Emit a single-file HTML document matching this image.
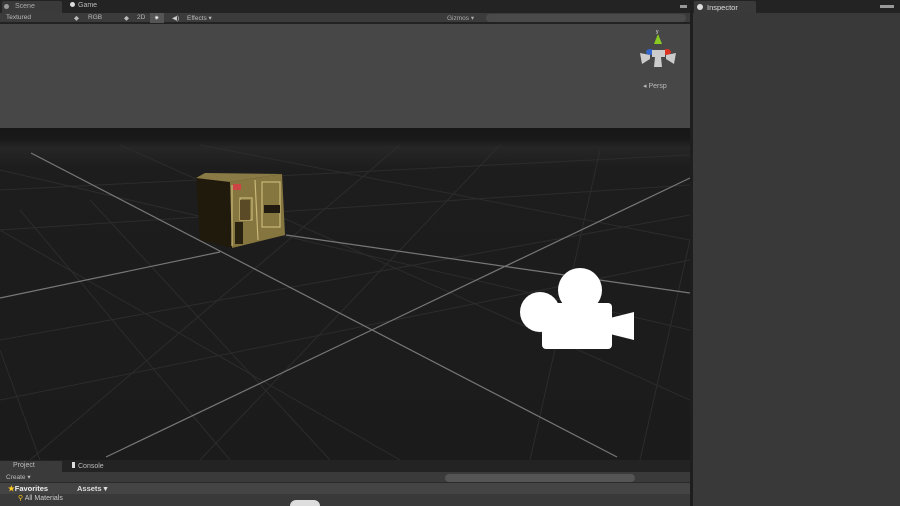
<!DOCTYPE html>
<html><head><style>
body{margin:0;width:900px;height:506px;overflow:hidden;background:#222;font-family:"Liberation Sans",sans-serif;font-size:7px;color:#c8c8c8;position:relative}
div{position:absolute;box-sizing:border-box}
</style></head><body>
<div style="left:0;top:0;width:690px;height:13px;background:#232323"></div>
<div style="left:2px;top:1px;width:60px;height:12px;background:#3a3a3a;border-radius:2px 2px 0 0;padding:2px 0 0 13px;color:#aaa">Scene</div>
<div style="left:4px;top:4px;width:5px;height:5px;border-radius:50%;background:#999"></div>
<div style="left:70px;top:2px;color:#bbb"><span style="display:inline-block;width:5px;height:5px;border-radius:50%;background:#ddd;margin-right:3px"></span>Game</div>
<div style="left:680px;top:5px;width:7px;height:3px;background:#999"></div>
<div style="left:0;top:13px;width:690px;height:10px;background:#3b3b3b;border-bottom:1px solid #222"></div>
<div style="left:6px;top:14px;color:#bbb;font-size:6.5px">Textured</div>
<div style="left:74px;top:14px;color:#bbb;font-size:6.5px">◆</div>
<div style="left:88px;top:14px;color:#bbb;font-size:6.5px">RGB</div>
<div style="left:124px;top:14px;color:#bbb;font-size:6.5px">◆</div>
<div style="left:137px;top:14px;color:#bbb;font-size:6.5px">2D</div>
<div style="left:150px;top:13px;width:14px;height:10px;background:#555"></div>
<div style="left:154px;top:14px;color:#eee;font-size:6.5px">✷</div>
<div style="left:172px;top:14px;color:#ccc;font-size:6.5px">◀)</div>
<div style="left:187px;top:14px;color:#bbb;font-size:6.5px">Effects ▾</div>
<div style="left:447px;top:14px;color:#aaa;font-size:6.5px">Gizmos ▾</div>
<div style="left:486px;top:14px;width:200px;height:8px;background:#4a4a4a;border-radius:4px"></div>
<div style="left:690px;top:0;width:3px;height:506px;background:#1e1e1e"></div>
<div style="left:693px;top:0;width:207px;height:13px;background:#232323"></div>
<div style="left:694px;top:1px;width:62px;height:12px;background:#3a3a3a;border-radius:2px 2px 0 0;padding:2px 0 0 13px;color:#ddd;font-size:7.5px">Inspector</div>
<div style="left:697px;top:4px;width:6px;height:6px;border-radius:50%;background:#ddd"></div>
<div style="left:880px;top:5px;width:14px;height:3px;background:#999"></div>
<div style="left:693px;top:13px;width:207px;height:493px;background:#393939"></div>
<svg style="position:absolute;left:0;top:24px" width="690" height="436" viewBox="0 24 690 436">
<defs><linearGradient id="g" x1="0" y1="0" x2="0" y2="1"><stop offset="0" stop-color="#171717"/><stop offset="0.03" stop-color="#181818"/><stop offset="0.06" stop-color="#262626"/><stop offset="0.12" stop-color="#1d1d1d"/><stop offset="1" stop-color="#1b1b1b"/></linearGradient></defs>
<rect x="0" y="24" width="690" height="104" fill="#474747"/>
<rect x="0" y="128" width="690" height="332" fill="url(#g)"/>
<g stroke="#2c2c2c" stroke-width="1" fill="none">
<line x1="0" y1="190" x2="690" y2="155"/><line x1="0" y1="230" x2="690" y2="185"/>
<line x1="0" y1="340" x2="690" y2="215"/><line x1="0" y1="400" x2="690" y2="260"/>
<line x1="200" y1="145" x2="690" y2="240"/><line x1="0" y1="170" x2="690" y2="330"/>
<line x1="0" y1="230" x2="400" y2="460"/><line x1="120" y1="145" x2="690" y2="400"/>
<line x1="0" y1="350" x2="40" y2="460"/><line x1="20" y1="210" x2="230" y2="460"/>
<line x1="90" y1="200" x2="330" y2="460"/><line x1="500" y1="145" x2="200" y2="460"/>
<line x1="600" y1="150" x2="530" y2="460"/><line x1="690" y1="240" x2="640" y2="460"/>
<line x1="400" y1="145" x2="30" y2="460"/>
</g>
<g stroke="#777" stroke-width="1.2" fill="none">
<line x1="31" y1="153" x2="617" y2="457"/>
<line x1="690" y1="178" x2="106" y2="457"/>
<line x1="0" y1="298" x2="220" y2="252"/>
<line x1="286" y1="235" x2="690" y2="293"/>
</g>
<polygon points="196,178 230,182 232,248 200,240" fill="#201a0c"/>
<polygon points="196,178 205,173 282,174 230,182" fill="#8a7a45"/>
<polygon points="230,182 282,174 285,235 232,248" fill="#85753f"/>
<g fill="none" stroke="#c8b878" stroke-width="1.2">
<polyline points="232,185 232,246"/><polyline points="255,180 258,240"/>
<rect x="240" y="198" width="12" height="22"/><rect x="262" y="182" width="18" height="45"/>
</g>
<rect x="240" y="200" width="10" height="20" fill="#5a4a25"/>
<rect x="235" y="222" width="8" height="22" fill="#2a2210"/>
<rect x="264" y="205" width="16" height="8" fill="#201a10"/>
<rect x="233" y="184" width="8" height="6" fill="#c44"/>
<g fill="#fff">
<circle cx="540" cy="312" r="20"/>
<circle cx="580" cy="290" r="22"/>
<rect x="542" y="303" width="70" height="46" rx="4"/>
<polygon points="610,318 634,312 634,340 610,334"/>
</g>
</svg>
<svg style="position:absolute;left:636px;top:28px" width="46" height="40">
<polygon points="18,16 22,6 26,16" fill="#8c2"/>
<text x="20" y="5" fill="#eee" font-size="5" font-family="Liberation Sans">y</text>
<ellipse cx="14" cy="24" rx="4" ry="3" fill="#36c"/>
<ellipse cx="31" cy="24" rx="4" ry="3" fill="#d32"/>
<rect x="16" y="22" width="13" height="7" fill="#ccc"/>
<path d="M4,25 L14,27 L14,31 L6,36 Z M40,25 L30,27 L30,31 L38,36 Z M19,29 L25,29 L26,39 L18,39 Z" fill="#ccc"/>
</svg>
<div style="left:643px;top:82px;color:#bbb;font-size:7px">◂ Persp</div>
<div style="left:0;top:460px;width:690px;height:12px;background:#232323"></div>
<div style="left:0;top:461px;width:62px;height:11px;background:#3a3a3a;padding:1px 0 0 13px;color:#bbb">Project</div>
<div style="left:72px;top:462px;color:#bbb"><span style="display:inline-block;width:3px;height:6px;background:#ddd;margin-right:3px"></span>Console</div>
<div style="left:0;top:472px;width:690px;height:11px;background:#3a3a3a;border-bottom:1px solid #2a2a2a"></div>
<div style="left:6px;top:473px;color:#bbb;font-size:6.5px">Create ▾</div>
<div style="left:445px;top:474px;width:190px;height:8px;background:#555;border-radius:4px"></div>
<div style="left:0;top:483px;width:690px;height:11px;background:#444"></div>
<div style="left:8px;top:484px;color:#eee;font-weight:bold;font-size:7.5px"><span style="color:#fc2">★</span>Favorites</div>
<div style="left:77px;top:484px;color:#ddd;font-weight:bold;font-size:7.5px">Assets ▾</div>
<div style="left:0;top:494px;width:690px;height:12px;background:#393939"></div>
<div style="left:18px;top:494px;color:#ccc;font-size:7px"><span style="color:#fc2">⚲</span> All Materials</div>
<div style="left:290px;top:500px;width:30px;height:6px;background:#ddd;border-radius:8px 8px 0 0"></div>
</body></html>
